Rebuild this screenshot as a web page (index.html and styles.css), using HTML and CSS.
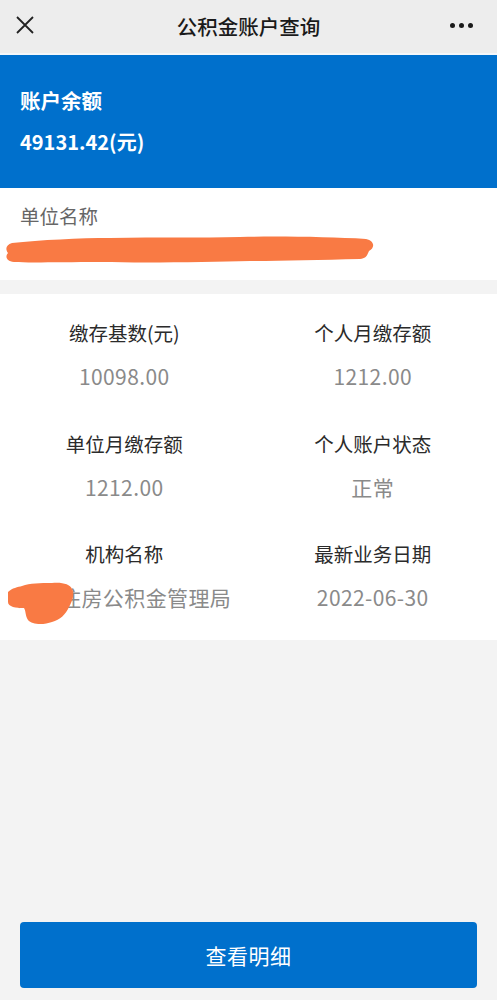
FILE: index.html
```html
<!DOCTYPE html>
<html lang="zh-CN">
<head>
<meta charset="utf-8">
<title>公积金账户查询</title>
<link rel="stylesheet" href="styles.css">
</head>
<body>
<div class="page">
  <header class="nav">
    <span class="nav-close">
      <svg width="18" height="18" viewBox="0 0 18 18"><path d="M1 1 L17 17 M17 1 L1 17" stroke="#222" stroke-width="1.8" fill="none"/></svg>
    </span>
    <h1 class="nav-title">公积金账户查询</h1>
    <span class="nav-more"><i></i><i></i><i></i></span>
  </header>

  <section class="balance">
    <div class="balance-label">账户余额</div>
    <div class="balance-amount">49131.42(元)</div>
  </section>

  <section class="unit">
    <div class="unit-label">单位名称</div>
    <div class="unit-name">
      <svg width="380" height="30" viewBox="0 0 380 30">
        <path d="M12 9 C40 6 80 4 110 4 C160 3 200 4 240 3 C280 2 330 3 366 5 C375 7 375 14 369 17 C367 21 367 24 360 25 C320 26 280 27 250 27 C210 28 150 29 100 28 C60 28 30 29 14 28 C6 27 5 22 8 19 C5 15 6 11 12 9 Z" fill="#f97a44"/>
      </svg>
    </div>
  </section>

  <section class="info">
    <div class="cell"><div class="cell-label">缴存基数(元)</div><div class="cell-value">10098.00</div></div>
    <div class="cell"><div class="cell-label">个人月缴存额</div><div class="cell-value">1212.00</div></div>
    <div class="cell"><div class="cell-label">单位月缴存额</div><div class="cell-value">1212.00</div></div>
    <div class="cell"><div class="cell-label">个人账户状态</div><div class="cell-value">正常</div></div>
    <div class="cell"><div class="cell-label">机构名称</div><div class="cell-value redacted">某市住房公积金管理局<svg class="blob" width="72" height="46" viewBox="0 0 72 46"><path d="M2 12 C6 8 12 7 16 6 C24 3 34 3 46 3 C56 2 64 4 66 9 C69 14 66 22 63 27 C60 34 54 40 46 42 C38 45 26 45 22 40 C19 35 20 31 18 28 C10 28 2 27 2 22 Z" fill="#f97a44"/></svg></div></div>
    <div class="cell"><div class="cell-label">最新业务日期</div><div class="cell-value">2022-06-30</div></div>
  </section>

  <div class="spacer"></div>

  <footer class="actions">
    <button class="btn-detail" type="button">查看明细</button>
  </footer>
</div>
</body>
</html>
```

FILE: styles.css
```css
* { box-sizing: border-box; margin: 0; padding: 0; }
html, body { height: 100%; }
body {
  background: #f3f3f3;
  font-family: "Noto Sans CJK SC", "Noto Sans", sans-serif;
  color: #333;
}
.page {
  display: flex;
  flex-direction: column;
  min-height: 1000px;
}
.nav {
  height: 55px;
  background: #ededed;
  border-bottom: 2px solid #f4f7fa;
  display: flex;
  align-items: center;
  justify-content: space-between;
  padding: 0 24px 3px 16px;
  position: relative;
}
.nav-close { display: flex; width: 18px; height: 18px; }
.nav-title {
  position: absolute;
  left: 0; right: 0;
  text-align: center;
  font-size: 20.5px;
  font-weight: 500;
  color: #1a1a1a;
  line-height: 52px;
  top: 0;
  pointer-events: none;
}
.nav-more { display: flex; gap: 4px; }
.nav-more i { width: 5px; height: 5px; border-radius: 50%; background: #1a1a1a; display: block; }

.balance {
  background: #0070cc;
  color: #fff;
  padding: 31px 20px 31px;
  height: 133px;
}
.balance-label { font-size: 20.5px; font-weight: 700; line-height: 28px; }
.balance-amount { font-size: 20px; font-weight: 700; line-height: 28px; margin-top: 14px; }

.unit {
  background: #fff;
  padding: 15px 0 0 0;
  height: 92px;
}
.unit-label { font-size: 19.5px; color: #666; line-height: 26px; padding-left: 20px; }
.unit-name { height: 30px; margin-top: 5px; }
.unit-name svg { display: block; }

.info {
  margin-top: 14px;
  background: #fff;
  display: grid;
  grid-template-columns: 1fr 1fr;
  row-gap: 37.5px;
  padding: 24px 0 28px;
}
.cell { text-align: center; }
.cell-label { font-size: 19.5px; line-height: 30px; color: #2b2b2b; }
.cell-value { font-size: 21px; line-height: 30px; color: #8a8a8a; margin-top: 13px; white-space: nowrap; letter-spacing: 0.4px; }
.redacted { position: relative; }
.blob { position: absolute; left: 6px; top: -2px; }

.spacer { flex: 1; }
.actions { padding: 0 20px 12px; }
.btn-detail {
  display: block;
  width: 100%;
  height: 66px;
  border: none;
  border-radius: 4px;
  background: #0070cc;
  color: #fff;
  font-family: inherit;
  font-size: 21px;
  letter-spacing: 0.5px;
}
```
